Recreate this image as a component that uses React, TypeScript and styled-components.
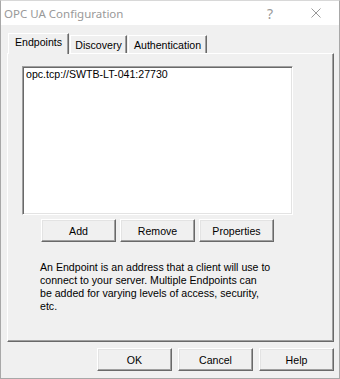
import React from "react";
import styled, { createGlobalStyle } from "styled-components";

const GlobalStyle = createGlobalStyle`
  html, body {
    margin: 0;
    padding: 0;
    background: #ffffff;
  }
  * {
    box-sizing: border-box;
  }
`;

const tabs = ["Endpoints", "Discovery", "Authentication"];
const tabWidths = [61, 57, 79];

export default function App() {
  return (
    <>
      <GlobalStyle />
      <Window>
        <TitleBar>
          <Title>OPC UA Configuration</Title>
          <CaptionButton>
            <Help>?</Help>
          </CaptionButton>
          <CaptionButton>
            <svg width="10" height="10" viewBox="0 0 10 10">
              <path d="M0.5 0.5 L9.5 9.5 M9.5 0.5 L0.5 9.5" stroke="#999" strokeWidth="1" fill="none" />
            </svg>
          </CaptionButton>
        </TitleBar>

        <Client>
          <TabRow>
            {tabs.map((t, i) => (
              <Tab key={t} $active={i === 0} $width={tabWidths[i]}>
                {t}
              </Tab>
            ))}
          </TabRow>

          <Panel>
            <ListBox>
              <ListItem>opc.tcp://SWTB-LT-041:27730</ListItem>
            </ListBox>

            <ListButtons>
              <Button>Add</Button>
              <Button>Remove</Button>
              <Button>Properties</Button>
            </ListButtons>

            <Description>
              An Endpoint is an address that a client will use to
              <br />
              connect to your server. Multiple Endpoints can
              <br />
              be added for varying levels of access, security,
              <br />
              etc.
            </Description>
          </Panel>

          <Footer>
            <Button>OK</Button>
            <Button>Cancel</Button>
            <Button>Help</Button>
          </Footer>
        </Client>
      </Window>
    </>
  );
}

const Window = styled.div`
  width: 340px;
  height: 379px;
  border: 1px solid #a8a8a8;
  border-top-color: #d8d8d8;
  background: #f0f0f0;
  display: flex;
  flex-direction: column;
  font-family: "Liberation Sans", Arial, sans-serif;
  font-size: 10.6px;
  color: #000;
`;

const TitleBar = styled.div`
  height: 24px;
  background: #ffffff;
  display: flex;
  align-items: center;
  padding-left: 3px;
`;

const Title = styled.div`
  flex: 1;
  font-family: "Noto Sans", "Open Sans", sans-serif;
  font-size: 11.5px;
  color: #999999;
  white-space: nowrap;
`;

const CaptionButton = styled.div`
  width: 46px;
  height: 24px;
  display: flex;
  align-items: center;
  justify-content: center;
`;

const Help = styled.span`
  font-family: "Noto Sans", "Open Sans", sans-serif;
  font-size: 14px;
  color: #999999;
`;

const Client = styled.div`
  flex: 1;
  padding: 8px 5px 0 6px;
  display: flex;
  flex-direction: column;
`;

const TabRow = styled.div`
  height: 20px;
  display: flex;
  align-items: flex-end;
  padding-left: 1px;
  position: relative;
  z-index: 1;
`;

const Tab = styled.div<{ $active: boolean; $width: number }>`
  width: ${(p) => p.$width}px;
  height: ${(p) => (p.$active ? 21 : 18)}px;
  margin-bottom: ${(p) => (p.$active ? -1 : 0)}px;
  margin-left: ${(p) => (p.$active ? 0 : 1)}px;
  padding-bottom: ${(p) => (p.$active ? 4 : 0)}px;
  border-top: 1px solid #ffffff;
  border-left: 1px solid #ffffff;
  border-right: 1px solid #696969;
  box-shadow: inset -1px 0 #a0a0a0;
  background: #f0f0f0;
  display: flex;
  align-items: center;
  justify-content: center;
  white-space: nowrap;
`;

const Panel = styled.div`
  width: 327px;
  height: 289px;
  border-top: 1px solid #ffffff;
  border-left: 1px solid #ffffff;
  border-right: 1px solid #696969;
  border-bottom: 1px solid #696969;
  box-shadow: inset -1px -1px #a0a0a0;
  padding: 12px 0 0 14px;
  display: flex;
  flex-direction: column;
`;

const ListBox = styled.div`
  width: 271px;
  height: 149px;
  background: #ffffff;
  border-top: 1px solid #a0a0a0;
  border-left: 1px solid #a0a0a0;
  border-right: 1px solid #ffffff;
  border-bottom: 1px solid #ffffff;
  box-shadow: inset 1px 1px #696969, inset -1px -1px #e3e3e3;
  padding: 1px 0 0 3px;
`;

const ListItem = styled.div`
  line-height: 13px;
  white-space: nowrap;
`;

const ListButtons = styled.div`
  display: flex;
  gap: 4px;
  margin-top: 4px;
  padding-left: 19px;
`;

const Button = styled.div`
  width: 75px;
  height: 23px;
  background: #f0f0f0;
  border-top: 1px solid #ffffff;
  border-left: 1px solid #ffffff;
  border-right: 1px solid #696969;
  border-bottom: 1px solid #696969;
  box-shadow: inset -1px -1px #a0a0a0, inset 1px 1px #e3e3e3;
  display: flex;
  align-items: center;
  justify-content: center;
  padding-top: 1px;
  white-space: nowrap;
`;

const Description = styled.div`
  margin-top: 19px;
  padding-left: 18px;
  line-height: 13px;
  white-space: nowrap;
`;

const Footer = styled.div`
  display: flex;
  justify-content: flex-end;
  gap: 6px;
  margin-top: 6px;
  width: 327px;
`;
